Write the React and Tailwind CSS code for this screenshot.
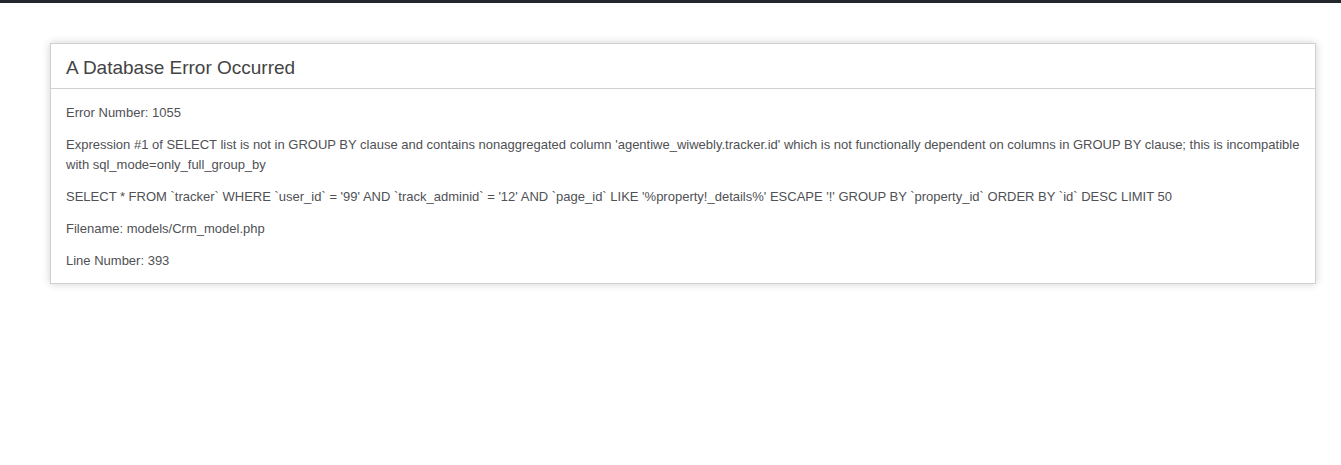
import React from "react";

const ErrorPage = () => {
  const lines = [
    "Error Number: 1055",
    "Expression #1 of SELECT list is not in GROUP BY clause and contains nonaggregated column 'agentiwe_wiwebly.tracker.id' which is not functionally dependent on columns in GROUP BY clause; this is incompatible with sql_mode=only_full_group_by",
    "SELECT * FROM `tracker` WHERE `user_id` = '99' AND `track_adminid` = '12' AND `page_id` LIKE '%property!_details%' ESCAPE '!' GROUP BY `property_id` ORDER BY `id` DESC LIMIT 50",
    "Filename: models/Crm_model.php",
    "Line Number: 393",
  ];

  return (
    <div className="min-h-[465px] bg-white font-['Liberation_Sans',Arial,sans-serif]">
      <div className="h-[3px] bg-[#22272e]" />
      <div className="pt-[40px] pl-[50px] pr-[25px]">
        <div className="border border-[#d0d0d0] bg-white shadow-[0_0_8px_#d0d0d0]">
          <h1 className="border-b border-[#d0d0d0] px-[15px] pt-[13px] pb-[9px] text-[19px] font-normal leading-[22px] text-[#444]">
            A Database Error Occurred
          </h1>
          <div className="pt-[14px] pb-[12px]">
            {lines.map((line, i) => (
              <p
                key={i}
                className={`px-[15px] text-[13px] leading-[20px] text-[#4f5155] ${
                  i > 0 ? "mt-[12px]" : ""
                }`}
              >
                {line}
              </p>
            ))}
          </div>
        </div>
      </div>
    </div>
  );
};

export default function App() {
  return <ErrorPage />;
}
